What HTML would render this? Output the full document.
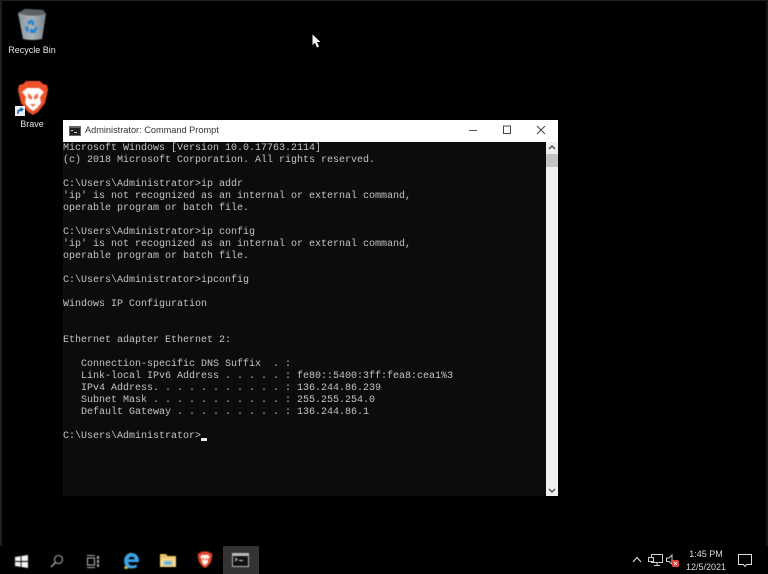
<!DOCTYPE html>
<html>
<head>
<meta charset="utf-8">
<style>
html,body{margin:0;padding:0;background:#000;}
body{width:768px;height:574px;overflow:hidden;position:relative;font-family:"Liberation Sans",sans-serif;}
.abs{position:absolute;}
#edgeL{left:0;top:0;width:2px;height:574px;background:#1a1f24;}
#edgeT{left:0;top:0;width:768px;height:1px;background:#1c2228;}
#edgeR{left:766px;top:0;width:2px;height:574px;background:#15181b;}
.dlabel{color:#e4e4e4;font-size:9px;text-align:center;white-space:nowrap;filter:blur(.35px);}
#win{left:63px;top:120px;width:495px;height:376px;background:#0c0c0c;}
#title{left:0;top:0;width:495px;height:22px;background:#fff;}
#title .t{position:absolute;left:22px;top:4px;font-size:9.2px;line-height:13px;color:#333;white-space:nowrap;filter:blur(.3px);}
#console{left:0;top:23px;width:483px;height:353px;margin:0;font-family:"Liberation Mono",monospace;font-size:10px;line-height:12px;color:#c4c4c4;white-space:pre;filter:blur(.35px);}
#cursor{left:138px;top:318px;width:6px;height:3px;background:#e8e8e8;}
#sb{left:483px;top:22px;width:12px;height:354px;background:#f0f0f0;}
#thumb{left:0;top:12px;width:12px;height:13px;background:#c4c4c4;}
#tb{left:0;top:546px;width:768px;height:28px;background:#000;}
#active{left:223px;top:0;width:36px;height:28px;background:#333;}
.tray{color:#dcdcdc;font-size:9px;line-height:12px;text-align:center;position:absolute;white-space:nowrap;filter:blur(.3px);}
.ic{filter:blur(.45px);}
</style>
</head>
<body>
<div class="abs" id="edgeL"></div>
<div class="abs" id="edgeT"></div>
<div class="abs" id="edgeR"></div>

<svg class="abs" style="left:17px;top:8px;filter:blur(.6px)" width="30" height="33" viewBox="0 0 30 33">
  <defs><linearGradient id="bg" x1="0" y1="0" x2="1" y2="0"><stop offset="0" stop-color="#8d979c"/><stop offset=".5" stop-color="#aab4b9"/><stop offset="1" stop-color="#79838a"/></linearGradient></defs>
  <path d="M1 5 L8 1 L26 2 L29 6 L25 31 Q15 33 6 31 Z" fill="url(#bg)"/>
  <path d="M1 5 L8 1 L26 2 L29 6 Q15 10 1 5Z" fill="#5c6164"/>
  <path d="M10 14 L15 11 L18 16 L15 18 L14 15 L12 17Z M18 18 L21 20 L18 25 L13 25 L13 21 L18 21Z M8 19 L11 18 L12 24 L9 23Z" fill="#2d86cf"/>
</svg>
<div class="abs dlabel" style="left:2px;top:45px;width:60px;">Recycle Bin</div>

<svg class="abs" style="left:17px;top:80px;filter:blur(.5px)" width="32" height="37" viewBox="0 0 32 37">
  <path d="M9 1 L23 1 L26 4 L30 5 L31 10 L28 23 L21 32 L16 35 L11 32 L4 23 L1 10 L2 5 L6 4 Z" fill="#ef5228"/>
  <path d="M10 8 L22 8 L27 12 L23 17 L24 23 L20 28 L16 31 L12 28 L8 23 L9 17 L5 12 Z" fill="#fff"/>
  <path d="M11 13 L15 16 L15 20 L11 18Z M21 13 L17 16 L17 20 L21 18Z M13 24 L19 24 L16 27Z" fill="#f0744f"/>
</svg>
<svg class="abs" style="left:15px;top:106px;filter:blur(.3px)" width="10" height="10" viewBox="0 0 9 9">
  <rect width="9" height="9" fill="#efefef"/><path d="M2 7 L2 4 L5 2 L5 1 L8 3 L5 5.500 L5 4.200 L3.500 5 L3.500 7Z" fill="#1f6fc0"/>
</svg>
<div class="abs dlabel" style="left:2px;top:119px;width:60px;">Brave</div>

<svg class="abs" style="left:312px;top:34px" width="10" height="15" viewBox="0 0 10 15">
  <path d="M0.500 0.500 L0.500 11 L3 8.800 L5 13.500 L7 12.600 L5 8 L8.500 8 Z" fill="#f4f4f4"/>
</svg>

<div class="abs" id="win">
  <pre class="abs" id="console">Microsoft Windows [Version 10.0.17763.2114]
(c) 2018 Microsoft Corporation. All rights reserved.

C:\Users\Administrator&gt;ip addr
'ip' is not recognized as an internal or external command,
operable program or batch file.

C:\Users\Administrator&gt;ip config
'ip' is not recognized as an internal or external command,
operable program or batch file.

C:\Users\Administrator&gt;ipconfig

Windows IP Configuration


Ethernet adapter Ethernet 2:

   Connection-specific DNS Suffix  . :
   Link-local IPv6 Address . . . . . : fe80::5400:3ff:fea8:cea1%3
   IPv4 Address. . . . . . . . . . . : 136.244.86.239
   Subnet Mask . . . . . . . . . . . : 255.255.254.0
   Default Gateway . . . . . . . . . : 136.244.86.1

C:\Users\Administrator&gt;</pre>
  <div class="abs" id="title">
    <svg class="abs" style="left:6px;top:6px;filter:blur(.3px)" width="12" height="10" viewBox="0 0 12 10">
      <rect width="12" height="10" fill="#666"/><rect x="1" y="2" width="10" height="7" fill="#222"/>
      <path d="M2 4h2v1H2zM5 6h3v1H5z" fill="#ccc"/>
    </svg>
    <div class="t">Administrator: Command Prompt</div>
    <svg class="abs" style="left:400px;top:0;filter:blur(.25px)" width="95" height="22" viewBox="0 0 95 22">
      <path d="M6 10.500 H14" stroke="#555" stroke-width="1"/>
      <rect x="40.500" y="6" width="7" height="7.500" fill="none" stroke="#444" stroke-width="1"/>
      <path d="M74 6 L82 14 M82 6 L74 14" stroke="#444" stroke-width="1"/>
    </svg>
  </div>
  <div class="abs" id="cursor"></div>
  <div class="abs" id="sb">
    <svg class="abs" style="left:0;top:0" width="12" height="12" viewBox="0 0 12 12"><path d="M3 7 L6 4 L9 7" fill="none" stroke="#555" stroke-width="1.500"/></svg>
    <div class="abs" id="thumb"></div>
    <svg class="abs" style="left:0;top:342px" width="12" height="12" viewBox="0 0 12 12"><path d="M3 5 L6 8 L9 5" fill="none" stroke="#555" stroke-width="1.500"/></svg>
  </div>
</div>

<div class="abs" id="tb">
  <div class="abs" id="active"></div>
  <svg class="abs ic" style="left:15px;top:9px" width="13" height="13" viewBox="0 0 13 13">
    <path d="M0 2 L5.700 1.100 V6 H0Z M6.500 1 L13 0 V6 H6.500Z M0 7 H5.700 V11.900 L0 11Z M6.500 7 H13 V13 L6.500 12Z" fill="#f2f2f2"/>
  </svg>
  <svg class="abs ic" style="left:50px;top:8px" width="14" height="14" viewBox="0 0 14 14">
    <circle cx="8.500" cy="5.500" r="4" fill="none" stroke="#aaa" stroke-width="1.100"/><path d="M5.500 8.500 L1 13" stroke="#aaa" stroke-width="1.300"/>
  </svg>
  <svg class="abs ic" style="left:86px;top:9px" width="14" height="13" viewBox="0 0 14 13">
    <path d="M1 0.500H9M1 12.500H9" stroke="#aaa" stroke-width="1"/><rect x="1.500" y="3" width="7" height="7" fill="none" stroke="#bbb"/>
    <path d="M11 1h2v3h-2zM11 5h2v3h-2zM11 9h2v3h-2z" fill="#aaa"/>
  </svg>
  <svg class="abs ic" style="left:122px;top:5px" width="19" height="19" viewBox="0 0 18 18">
    <path d="M3 14 C1 17 3 18 7 16 L5 13Z" fill="#e2b93a"/>
    <path d="M2 8 C3 4 6 2 9 1.500 L5 6Z" fill="#8fc66a"/>
    <path d="M16 10.500 H6 C6.300 14 10.500 14.800 14 12.500 V15.500 C8 18 2 15.500 2 9.500 C2 5 5.500 2 9.500 2 C13.500 2 16.500 5.500 16 10.500Z M6.200 7.800 H12 C12 4.600 6.700 4.600 6.200 7.800Z" fill="#38a4e4" fill-rule="evenodd"/>
  </svg>
  <svg class="abs ic" style="left:160px;top:7px" width="16" height="15" viewBox="0 0 16 15">
    <path d="M0 1H6L7.500 3H16V14H0Z" fill="#ecc466"/><rect x="0" y="5" width="16" height="9" fill="#f3d78c"/>
    <rect x="4" y="8" width="8" height="4" fill="#6db8df"/>
  </svg>
  <svg class="abs ic" style="left:197px;top:5px" width="16" height="18" viewBox="0 0 32 37">
    <path d="M9 1 L23 1 L26 4 L30 5 L31 10 L28 23 L21 32 L16 35 L11 32 L4 23 L1 10 L2 5 L6 4 Z" fill="#e8462a"/>
    <path d="M10 8 L22 8 L26 12 L22 17 L22 23 L19 27 L16 30 L13 27 L10 23 L10 17 L6 12 Z" fill="#fff"/>
    <path d="M11 13 L15 16 L15 20 L11 18Z M21 13 L17 16 L17 20 L21 18Z" fill="#ee7050"/>
  </svg>
  <svg class="abs ic" style="left:232px;top:7px" width="17" height="14" viewBox="0 0 17 14">
    <rect width="17" height="14" fill="#bbb"/><rect x="1" y="3" width="15" height="10" fill="#111"/>
    <path d="M3 5 L5 6.500 L3 8" fill="none" stroke="#ddd"/><path d="M7 7.500H11" stroke="#ddd"/>
  </svg>
  <svg class="abs" style="left:632px;top:10px;filter:blur(.25px)" width="10" height="7" viewBox="0 0 10 7"><path d="M1 6 L5 1.500 L9 6" fill="none" stroke="#ddd" stroke-width="1.100"/></svg>
  <svg class="abs" style="left:648px;top:8px;filter:blur(.25px)" width="15" height="13" viewBox="0 0 15 13">
    <rect x="3.500" y="0.500" width="11" height="8" fill="none" stroke="#ccc"/><rect x="0.500" y="3.500" width="5" height="4" fill="#000" stroke="#ccc"/>
    <path d="M9 9V11M6 11.500H12" stroke="#ccc"/>
  </svg>
  <svg class="abs" style="left:666px;top:8px;filter:blur(.25px)" width="14" height="14" viewBox="0 0 14 14">
    <path d="M0.500 4H3L6 1V10L3 7.500H0.500Z" fill="none" stroke="#ccc"/>
    <rect x="6" y="6" width="7" height="7" rx="1.500" fill="#e2403f"/><path d="M8 8L11 11M11 8L8 11" stroke="#fff" stroke-width=".8"/>
  </svg>
  <div class="tray" style="left:685px;top:2px;width:42px;">1:45 PM</div>
  <div class="tray" style="left:685px;top:15px;width:42px;">12/5/2021</div>
  <svg class="abs" style="left:738px;top:8px;filter:blur(.25px)" width="14" height="14" viewBox="0 0 14 14">
    <path d="M0.500 0.500H13.500V10.500H8.500L7 12.500L5.500 10.500H0.500Z" fill="none" stroke="#ddd"/>
  </svg>
</div>
</body>
</html>
